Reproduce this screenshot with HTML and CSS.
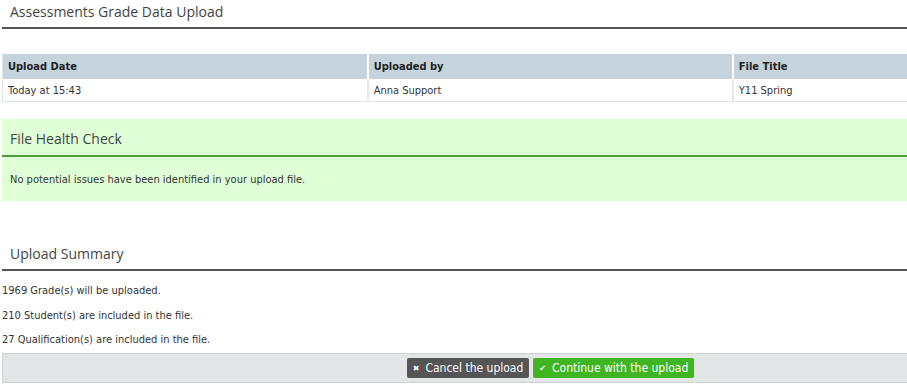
FILE: index.html
```html
<!DOCTYPE html>
<html lang="en">
<head>
    <meta charset="UTF-8">
    <meta name="viewport" content="width=device-width, initial-scale=1.0">
    <title>Assessments Grade Data Upload</title>
    <link rel="stylesheet" href="styles.css">
</head>
<body>
    <div class="page">
        <h2 class="section-title">Assessments Grade Data Upload</h2>

        <table class="upload-info">
            <thead>
                <tr>
                    <th>Upload Date</th>
                    <th>Uploaded by</th>
                    <th>File Title</th>
                </tr>
            </thead>
            <tbody>
                <tr>
                    <td>Today at 15:43</td>
                    <td>Anna Support</td>
                    <td>Y11 Spring</td>
                </tr>
            </tbody>
        </table>

        <div class="health-check">
            <h2 class="section-title">File Health Check</h2>
            <p>No potential issues have been identified in your upload file.</p>
        </div>

        <h2 class="section-title summary-title">Upload Summary</h2>
        <div class="summary">
            <p>1969 Grade(s) will be uploaded.</p>
            <p>210 Student(s) are included in the file.</p>
            <p>27 Qualification(s) are included in the file.</p>
        </div>

        <div class="actions">
            <button class="btn btn-cancel"><span class="icon">&#10006;</span>Cancel the upload</button>
            <button class="btn btn-continue"><span class="icon">&#10004;</span>Continue with the upload</button>
        </div>
    </div>
</body>
</html>
```

FILE: styles.css
```css
html, body {
    overflow: hidden;
}
body {
    margin: 0;
    font-family: "DejaVu Sans Condensed", "DejaVu Sans", sans-serif;
    font-size: 11px;
    color: #333;
    background: #fff;
}
.page {
    width: 1097px;
    margin-left: 2px;
}
.section-title {
    margin: 0;
    padding: 2px 8px 5px;
    font-family: "Open Sans", sans-serif;
    font-size: 14px;
    font-weight: normal;
    line-height: 20px;
    color: #444;
    border-bottom: 2px solid #555;
}
.upload-info {
    width: 100%;
    margin-top: 25px;
    border-collapse: collapse;
    table-layout: fixed;
    border-left: 1px solid #dde3e6;
    border-bottom: 1px solid #dde3e6;
}
.upload-info th {
    background: #c5d3dd;
    text-align: left;
    font-weight: bold;
    height: 25px;
    padding: 0 5px;
    border-right: 2px solid #fff;
    color: #222;
}
.upload-info td {
    height: 22px;
    padding: 0 5px;
    border-right: 2px solid #e6e9eb;
}
.health-check {
    margin-top: 17px;
    background: #dfffd6;
    height: 82px;
}
.health-check .section-title {
    padding: 10px 8px 6px;
    border-bottom-color: #4f9d37;
}
.health-check p {
    margin: 0;
    padding: 15px 8px 0;
    line-height: 16px;
}
.summary-title {
    margin-top: 41px;
}
.summary {
    padding-top: 12px;
}
.summary p {
    margin: 0 0 8.5px;
    line-height: 16px;
}
.summary p:last-child {
    margin-bottom: 5px;
}
.actions {
    display: flex;
    justify-content: center;
    gap: 4px;
    padding: 4px 0;
    background: #e3e6e7;
    border: 1px solid #cfd3d5;
}
.btn {
    height: 20px;
    padding: 0 6px;
    border: none;
    border-radius: 2px;
    color: #fff;
    font-family: inherit;
    font-size: 12px;
    line-height: 20px;
    cursor: pointer;
}
.btn .icon {
    font-family: "DejaVu Sans", sans-serif;
    font-size: 8px;
    margin-right: 6px;
    vertical-align: 1px;
}
.btn-cancel {
    background: #555;
}
.btn-continue {
    background: #3fb521;
}
```
